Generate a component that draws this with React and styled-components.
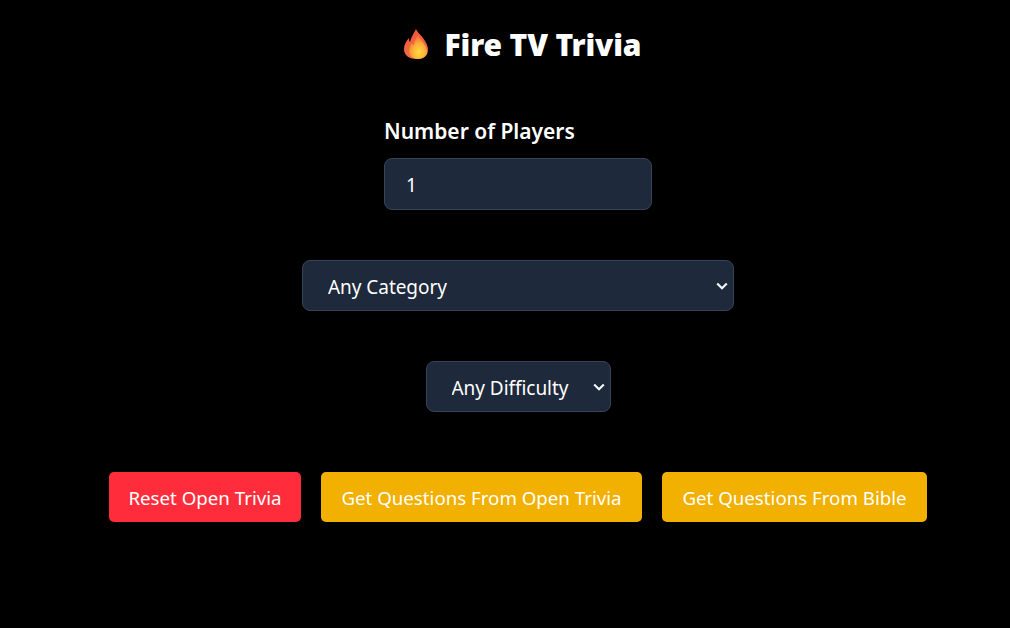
import styled, { createGlobalStyle } from 'styled-components';

const chevron = `url("data:image/svg+xml,%3Csvg xmlns='http://www.w3.org/2000/svg' width='12' height='8' viewBox='0 0 12 8'%3E%3Cpath d='M1.2 1.5 6 6.2l4.8-4.7' fill='none' stroke='%23f1f5f9' stroke-width='2.2'/%3E%3C/svg%3E")`;

const GlobalStyle = createGlobalStyle`
  html, body {
    margin: 0;
    background: #000;
    color: #fff;
    font-family: "Noto Sans", "Open Sans", sans-serif;
  }
`;

const Page = styled.main`
  display: flex;
  flex-direction: column;
  align-items: center;
  box-sizing: border-box;
  width: 1010px;
  height: 628px;
  padding: 23px 0 0 26px;
  overflow: hidden;
`;

const Title = styled.h1`
  display: flex;
  align-items: center;
  gap: 16px;
  height: 42px;
  margin: 0 0 0 8px;
  font-size: 30px;
  font-weight: 900;
  letter-spacing: -0.15px;
`;

const Field = styled.div`
  display: flex;
  flex-direction: column;
  gap: 12px;
  margin: 51px 0 50px;
`;

const Label = styled.label`
  font-size: 21px;
  font-weight: 600;
  line-height: 30px;
`;

const NumberInput = styled.input`
  box-sizing: border-box;
  width: 268px;
  height: 52px;
  padding: 2px 21px 0;
  border: 1px solid #374357;
  border-radius: 8px;
  background: #1e293b;
  color: #fff;
  font: inherit;
  font-size: 19px;
  outline: none;
`;

const Select = styled.select`
  appearance: none;
  box-sizing: border-box;
  display: block;
  width: ${props => props.$width}px;
  height: 51px;
  margin-bottom: 50px;
  padding: 2px 25px 0;
  border: 1px solid #374357;
  border-radius: 8px;
  background: #1e293b ${chevron} no-repeat right 5px center / 12px 8px;
  color: #fff;
  font: inherit;
  font-size: 19px;
  letter-spacing: -0.05px;
`;

const Buttons = styled.div`
  display: flex;
  gap: 20px;
  margin-top: 10px;
`;

const Button = styled.button`
  box-sizing: border-box;
  width: ${props => props.$width}px;
  height: 50px;
  padding: 0;
  border: none;
  border-radius: 5px;
  background: ${props => props.$bg};
  color: #fff;
  font: inherit;
  font-size: 18.7px;
  white-space: nowrap;
`;

function Flame() {
  return (
    <svg width="26" height="32" viewBox="0 0 26 32" aria-hidden="true">
      <defs>
        <linearGradient id="flameBack" x1="0" y1="0" x2="0.3" y2="1">
          <stop offset="0" stopColor="#f4513a" />
          <stop offset="1" stopColor="#e9713f" />
        </linearGradient>
        <radialGradient id="flameCore" cx="0.55" cy="0.72" r="0.72">
          <stop offset="0" stopColor="#ffdc3f" />
          <stop offset="0.5" stopColor="#fdae3a" />
          <stop offset="1" stopColor="#f8603a" />
        </radialGradient>
      </defs>
      <path
        d="M13 1c1 3 4 5 7 9 3 4 5 8 5 12 0 6-5 9-11 9-7 0-13-3-13-10 0-4 2-8 5-11 0 2 0 3 1 4 1-5 4-9 6-13z"
        fill="url(#flameBack)"
      />
      <path
        d="M15 7c1 3 4 5 6 9 2 3 3 5 3 8 0 4-4 7-9 7-5 0-9-3-9-8 0-3 1-5 3-8 1 1 1 2 2 2 0-4 2-7 4-10z"
        fill="url(#flameCore)"
      />
    </svg>
  );
}

export default function App() {
  return (
    <Page>
      <GlobalStyle />
      <Title>
        <Flame />
        Fire TV Trivia
      </Title>
      <Field>
        <Label htmlFor="players">Number of Players</Label>
        <NumberInput id="players" type="text" defaultValue="1" />
      </Field>
      <Select $width={432}>
        <option>Any Category</option>
      </Select>
      <Select $width={185}>
        <option>Any Difficulty</option>
      </Select>
      <Buttons>
        <Button $width={192} $bg="#ff2d3b">Reset Open Trivia</Button>
        <Button $width={321} $bg="#f2b000">Get Questions From Open Trivia</Button>
        <Button $width={265} $bg="#f2b000">Get Questions From Bible</Button>
      </Buttons>
    </Page>
  );
}
